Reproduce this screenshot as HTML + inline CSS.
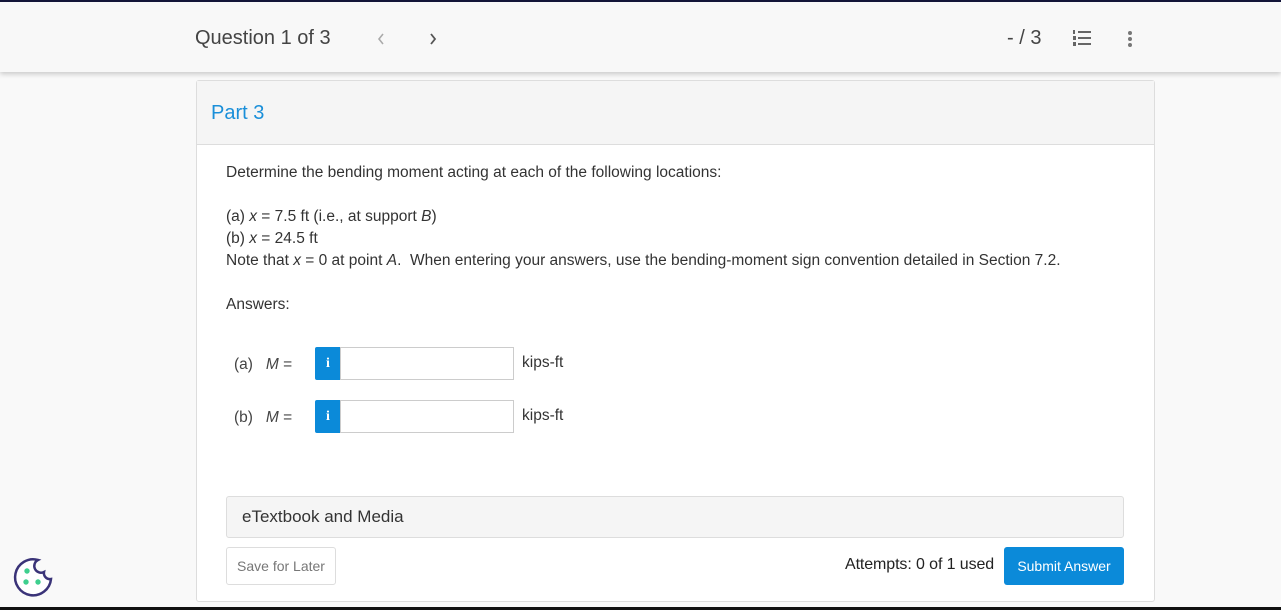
<!DOCTYPE html>
<html><head><style>
*{margin:0;padding:0;box-sizing:border-box}
body{width:1281px;height:610px;overflow:hidden;background:#f9f9f9;font-family:"Liberation Sans",sans-serif;color:#333;position:relative}
.top{position:absolute;left:0;top:0;width:1281px;height:2px;background:#14163a}
.bot{position:absolute;left:0;top:607px;width:1281px;height:3px;background:#111}
.hdr{position:absolute;left:0;top:2px;width:1281px;height:70px;background:#f8f8f8;box-shadow:0 2px 5px rgba(0,0,0,.2);z-index:2}
.abs{position:absolute}
.card{position:absolute;left:196px;top:80px;width:959px;height:522px;background:#fff;border:1px solid #ddd;border-radius:3px}
.ch{height:64px;background:#f5f5f5;border-bottom:1px solid #ddd}
.t{position:absolute;font-size:15.5px;color:#333}
.inp{position:absolute;width:199px;height:33px;border:1px solid #ccc;background:#fff}
.ib{position:absolute;width:26px;height:33px;background:#0b8ad9;border-radius:2px 0 0 2px;color:#fff;font-weight:bold;font-family:"Liberation Serif",serif;font-size:14px;text-align:center;line-height:33px}
</style></head><body>
<div class="top"></div>
<div class="hdr">
 <div class="abs" style="left:195px;top:25px;font-size:20px;color:#444">Question 1 of 3</div>
 <svg class="abs" style="left:376px;top:30px" width="10" height="14"><path d="M7 2 L3 7 L7 12" fill="none" stroke="#aaa" stroke-width="1.6"/></svg>
 <svg class="abs" style="left:428px;top:30px" width="10" height="14"><path d="M3 2 L7 7 L3 12" fill="none" stroke="#555" stroke-width="1.8"/></svg>
 <div class="abs" style="left:1007px;top:25px;font-size:20px;color:#444">- / 3</div>
 <svg class="abs" style="left:1072px;top:28px" width="22" height="18"><g fill="#666"><rect x="6" y="1" width="13" height="2"/><rect x="6" y="7" width="13" height="2"/><rect x="6" y="13" width="13" height="2"/><rect x="1" y="0" width="2" height="4"/><rect x="1" y="6" width="3" height="4"/><rect x="1" y="12" width="3" height="4"/></g></svg>
 <svg class="abs" style="left:1127px;top:28px" width="6" height="18"><g fill="#777"><circle cx="3" cy="3" r="2"/><circle cx="3" cy="9" r="2"/><circle cx="3" cy="15" r="2"/></g></svg>
</div>
<div class="card"><div class="ch"></div></div>
<div class="abs" style="left:211px;top:102px;font-size:20px;color:#1a8fd9">Part 3</div>
<div class="t" style="left:226px;top:164px">Determine the bending moment acting at each of the following locations:</div>
<div class="t" style="left:226px;top:208px">(a) <i>x</i> = 7.5 ft (i.e., at support <i>B</i>)</div>
<div class="t" style="left:226px;top:230px">(b) <i>x</i> = 24.5 ft</div>
<div class="t" style="left:226px;top:252px">Note that <i>x</i> = 0 at point <i>A</i>. &nbsp;When entering your answers, use the bending-moment sign convention detailed in Section 7.2.</div>
<div class="t" style="left:226px;top:296px">Answers:</div>
<div class="t" style="left:234px;top:356px;color:#444">(a) &nbsp;&nbsp;<i>M</i> =</div>
<div class="ib" style="left:315px;top:347px">i</div><div class="inp" style="left:340px;top:347px;width:174px"></div>
<div class="t" style="left:522px;top:354px">kips-ft</div>
<div class="t" style="left:234px;top:409px;color:#444">(b) &nbsp;&nbsp;<i>M</i> =</div>
<div class="ib" style="left:315px;top:400px">i</div><div class="inp" style="left:340px;top:400px;width:174px"></div>
<div class="t" style="left:522px;top:407px">kips-ft</div>
<div class="abs" style="left:226px;top:496px;width:898px;height:42px;background:#f5f5f5;border:1px solid #ddd;border-radius:3px;font-size:17px;padding:10px 15px;color:#333">eTextbook and Media</div>
<div class="abs" style="left:226px;top:547px;width:110px;height:38px;border:1px solid #ddd;border-radius:3px;background:#fff;font-size:14px;color:#777;text-align:center;line-height:36px">Save for Later</div>
<div class="abs" style="left:845px;top:556px;font-size:16px;color:#222;letter-spacing:-0.1px">Attempts: 0 of 1 used</div>
<div class="abs" style="left:1004px;top:547px;width:120px;height:38px;background:#0b8ad9;border-radius:3px;color:#fff;font-size:14px;text-align:center;line-height:38px">Submit Answer</div>
<svg class="abs" style="left:11px;top:556px" width="42" height="42"><path d="M27 4 A18 18 0 1 0 40 23 A6 6 0 0 1 33 16 A6 6 0 0 1 27 4 Z" fill="#fff" stroke="#3a3378" stroke-width="2.5"/><g fill="#3ecf8e"><circle cx="16" cy="15" r="2.7"/><circle cx="15" cy="26" r="2.7"/><circle cx="27" cy="26" r="2.7"/></g></svg>
<div class="bot"></div>
</body></html>
